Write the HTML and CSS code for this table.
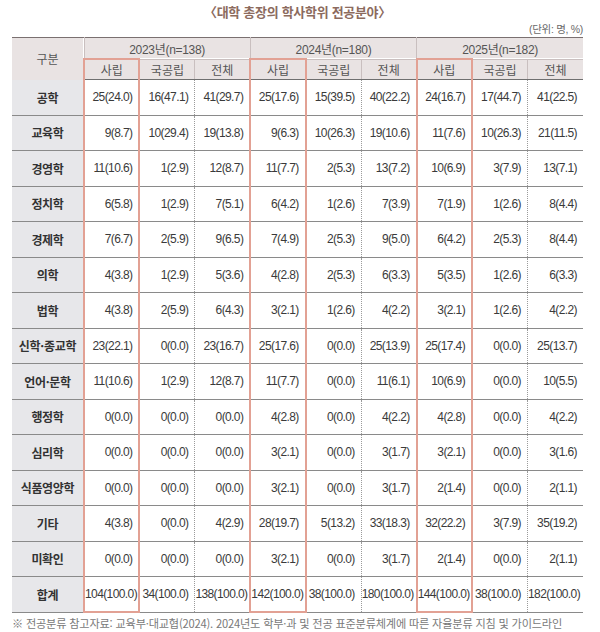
FILE: index.html
```html
<!DOCTYPE html>
<html lang="ko">
<head>
<meta charset="utf-8">
<link rel="stylesheet" href="styles.css">
</head>
<body>
<div class="page">
  <h1 class="title">〈대학 총장의 학사학위 전공분야〉</h1>
  <div class="unit">(단위: 명, %)</div>
  <table class="tbl">
    <colgroup>
      <col class="c-label">
      <col><col><col><col><col><col><col><col><col>
    </colgroup>
    <thead>
      <tr class="h1">
        <th rowspan="2" class="lab">구분</th>
        <th colspan="3" class="grp">2023년(n=138)</th>
        <th colspan="3" class="grp">2024년(n=180)</th>
        <th colspan="3" class="grp">2025년(n=182)</th>
      </tr>
      <tr class="h2">
        <th class="pv">사립</th><th class="nat">국공립</th><th class="tot">전체</th>
        <th class="pv">사립</th><th class="nat">국공립</th><th class="tot">전체</th>
        <th class="pv">사립</th><th class="nat">국공립</th><th class="tot last">전체</th>
      </tr>
    </thead>
    <tbody>
      <tr><th>공학</th><td class="pv">25(24.0)</td><td class="nat">16(47.1)</td><td class="tot">41(29.7)</td><td class="pv">25(17.6)</td><td class="nat">15(39.5)</td><td class="tot">40(22.2)</td><td class="pv">24(16.7)</td><td class="nat">17(44.7)</td><td class="tot">41(22.5)</td></tr>
      <tr><th>교육학</th><td class="pv">9(8.7)</td><td class="nat">10(29.4)</td><td class="tot">19(13.8)</td><td class="pv">9(6.3)</td><td class="nat">10(26.3)</td><td class="tot">19(10.6)</td><td class="pv">11(7.6)</td><td class="nat">10(26.3)</td><td class="tot">21(11.5)</td></tr>
      <tr><th>경영학</th><td class="pv">11(10.6)</td><td class="nat">1(2.9)</td><td class="tot">12(8.7)</td><td class="pv">11(7.7)</td><td class="nat">2(5.3)</td><td class="tot">13(7.2)</td><td class="pv">10(6.9)</td><td class="nat">3(7.9)</td><td class="tot">13(7.1)</td></tr>
      <tr><th>정치학</th><td class="pv">6(5.8)</td><td class="nat">1(2.9)</td><td class="tot">7(5.1)</td><td class="pv">6(4.2)</td><td class="nat">1(2.6)</td><td class="tot">7(3.9)</td><td class="pv">7(1.9)</td><td class="nat">1(2.6)</td><td class="tot">8(4.4)</td></tr>
      <tr><th>경제학</th><td class="pv">7(6.7)</td><td class="nat">2(5.9)</td><td class="tot">9(6.5)</td><td class="pv">7(4.9)</td><td class="nat">2(5.3)</td><td class="tot">9(5.0)</td><td class="pv">6(4.2)</td><td class="nat">2(5.3)</td><td class="tot">8(4.4)</td></tr>
      <tr><th>의학</th><td class="pv">4(3.8)</td><td class="nat">1(2.9)</td><td class="tot">5(3.6)</td><td class="pv">4(2.8)</td><td class="nat">2(5.3)</td><td class="tot">6(3.3)</td><td class="pv">5(3.5)</td><td class="nat">1(2.6)</td><td class="tot">6(3.3)</td></tr>
      <tr><th>법학</th><td class="pv">4(3.8)</td><td class="nat">2(5.9)</td><td class="tot">6(4.3)</td><td class="pv">3(2.1)</td><td class="nat">1(2.6)</td><td class="tot">4(2.2)</td><td class="pv">3(2.1)</td><td class="nat">1(2.6)</td><td class="tot">4(2.2)</td></tr>
      <tr><th>신학·종교학</th><td class="pv">23(22.1)</td><td class="nat">0(0.0)</td><td class="tot">23(16.7)</td><td class="pv">25(17.6)</td><td class="nat">0(0.0)</td><td class="tot">25(13.9)</td><td class="pv">25(17.4)</td><td class="nat">0(0.0)</td><td class="tot">25(13.7)</td></tr>
      <tr><th>언어·문학</th><td class="pv">11(10.6)</td><td class="nat">1(2.9)</td><td class="tot">12(8.7)</td><td class="pv">11(7.7)</td><td class="nat">0(0.0)</td><td class="tot">11(6.1)</td><td class="pv">10(6.9)</td><td class="nat">0(0.0)</td><td class="tot">10(5.5)</td></tr>
      <tr><th>행정학</th><td class="pv">0(0.0)</td><td class="nat">0(0.0)</td><td class="tot">0(0.0)</td><td class="pv">4(2.8)</td><td class="nat">0(0.0)</td><td class="tot">4(2.2)</td><td class="pv">4(2.8)</td><td class="nat">0(0.0)</td><td class="tot">4(2.2)</td></tr>
      <tr><th>심리학</th><td class="pv">0(0.0)</td><td class="nat">0(0.0)</td><td class="tot">0(0.0)</td><td class="pv">3(2.1)</td><td class="nat">0(0.0)</td><td class="tot">3(1.7)</td><td class="pv">3(2.1)</td><td class="nat">0(0.0)</td><td class="tot">3(1.6)</td></tr>
      <tr><th>식품영양학</th><td class="pv">0(0.0)</td><td class="nat">0(0.0)</td><td class="tot">0(0.0)</td><td class="pv">3(2.1)</td><td class="nat">0(0.0)</td><td class="tot">3(1.7)</td><td class="pv">2(1.4)</td><td class="nat">0(0.0)</td><td class="tot">2(1.1)</td></tr>
      <tr><th>기타</th><td class="pv">4(3.8)</td><td class="nat">0(0.0)</td><td class="tot">4(2.9)</td><td class="pv">28(19.7)</td><td class="nat">5(13.2)</td><td class="tot">33(18.3)</td><td class="pv">32(22.2)</td><td class="nat">3(7.9)</td><td class="tot">35(19.2)</td></tr>
      <tr><th>미확인</th><td class="pv">0(0.0)</td><td class="nat">0(0.0)</td><td class="tot">0(0.0)</td><td class="pv">3(2.1)</td><td class="nat">0(0.0)</td><td class="tot">3(1.7)</td><td class="pv">2(1.4)</td><td class="nat">0(0.0)</td><td class="tot">2(1.1)</td></tr>
      <tr class="sum"><th>합계</th><td class="pv">104(100.0)</td><td class="nat">34(100.0)</td><td class="tot">138(100.0)</td><td class="pv">142(100.0)</td><td class="nat">38(100.0)</td><td class="tot">180(100.0)</td><td class="pv">144(100.0)</td><td class="nat">38(100.0)</td><td class="tot">182(100.0)</td></tr>
    </tbody>
  </table>
  <p class="note">※ 전공분류 참고자료: 교육부·대교협(2024). 2024년도 학부·과 및 전공 표준분류체계에 따른 자율분류 지침 및 가이드라인</p>
</div>
</body>
</html>
```

FILE: styles.css
```css
html, body {
  margin: 0;
  padding: 0;
  background: #ffffff;
}

body {
  font-family: "Noto Sans CJK KR", "Noto Sans", sans-serif;
  color: #333333;
}

.page {
  width: 600px;
  height: 632px;
  padding: 0 17px 0 12px;
  box-sizing: border-box;
  overflow: hidden;
}

.title {
  margin: 0;
  padding-top: 2px;
  height: 20px;
  line-height: 20px;
  font-size: 13px;
  font-weight: 700;
  text-align: center;
  color: #8c6b5e;
  letter-spacing: -0.3px;
}

.unit {
  height: 15px;
  line-height: 15px;
  font-family: "Liberation Sans", "Noto Sans CJK KR", sans-serif;
  font-size: 10.5px;
  text-align: right;
  color: #6a6a6a;
  letter-spacing: -0.3px;
}

.tbl {
  width: 571px;
  table-layout: fixed;
  border-collapse: collapse;
  font-family: "Liberation Sans Narrow", "Liberation Sans", "Noto Sans CJK KR", sans-serif;
  font-size: 12px;
  color: #3a3a3a;
}

.tbl col.c-label {
  width: 72px;
}

.tbl th,
.tbl td {
  padding: 0;
  overflow: hidden;
  white-space: nowrap;
}

/* header */
.tbl thead th {
  background: #e9e3e3;
  font-family: "Liberation Sans", "Noto Sans CJK KR", sans-serif;
  font-weight: 400;
  font-size: 12px;
  color: #555555;
  text-align: center;
  border-left: 1px solid #c9bfbf;
  border-right: 1px solid #c9bfbf;
}

.tbl thead th.lab {
  border-left: none;
}

.tbl thead tr.h1 th {
  height: 20px;
  border-top: 1px solid #7a7070;
}

.tbl thead tr.h1 th.grp {
  border-bottom: 1px solid #c9bfbf;
  letter-spacing: -0.3px;
}

.tbl thead tr.h1 th.grp:last-child {
  border-right: none;
}

.tbl thead tr.h2 th {
  height: 19px;
  border-bottom: 1px solid #6f6f6f;
}

.tbl thead tr.h2 th.last {
  border-right: none;
}

.tbl thead tr.h2 th.pv {
  border-top: 2px solid #e2a194;
  border-left: 2px solid #e2a194;
  border-right: 2px solid #e2a194;
}

/* body */
.tbl tbody tr {
  height: 35.5px;
}

.tbl tbody th {
  background: #e7e7ea;
  font-family: "Noto Sans CJK KR", "Noto Sans", sans-serif;
  font-weight: 700;
  font-size: 12px;
  color: #333333;
  text-align: center;
  letter-spacing: -0.3px;
  border-bottom: 1px solid #8a8a8a;
}

.tbl tbody td {
  text-align: right;
  padding-right: 6px;
  letter-spacing: -0.6px;
  border-bottom: 1px solid #8a8a8a;
}

.tbl tbody td.pv {
  border-left: 2px solid #e2a194;
  border-right: 2px solid #e2a194;
}

.tbl tbody td.nat {
  border-right: 1px dotted #9a9a9a;
}

.tbl tbody tr.sum td.pv {
  border-bottom: 2px solid #e2a194;
}

.note {
  margin: 3px 0 0 0;
  font-size: 11.2px;
  line-height: 14px;
  color: #7a7a7a;
  white-space: nowrap;
  letter-spacing: -0.2px;
}
```
